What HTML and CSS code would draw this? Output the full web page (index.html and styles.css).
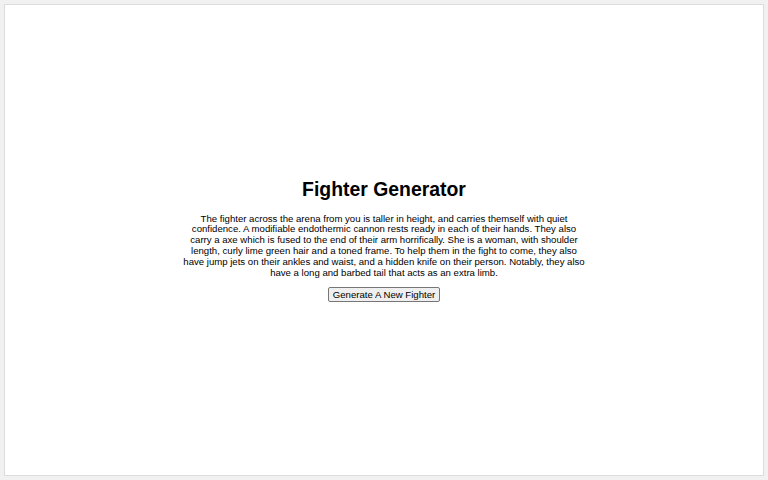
FILE: index.html
```html
<!DOCTYPE html>
<html lang="en">
<head>
    <title>Fighter Generator</title>
    <link rel="stylesheet" href="styles.css">
</head>
<body>
    <div class="frame">
        <div class="generator">
            <h1 class="title">Fighter Generator</h1>
            <p class="fighter-text" id="fighter-text">The fighter across the arena from you is taller in height, and carries themself with quiet confidence. A modifiable endothermic cannon rests ready in each of their hands. They also carry a axe which is fused to the end of their arm horrifically. She is a woman, with shoulder length, curly lime green hair and a toned frame. To help them in the fight to come, they also have jump jets on their ankles and waist, and a hidden knife on their person. Notably, they also have a long and barbed tail that acts as an extra limb.</p>
            <button class="new-button" id="btn">Generate A New Fighter</button>
        </div>
    </div>
</body>
</html>
```

FILE: styles.css
```css
* {
    margin: 0;
    padding: 0;
    box-sizing: border-box;
}

body {
    background: #f1f1f1;
    font-family: "Liberation Sans", Arial, sans-serif;
    padding: 4px;
    height: 480px;
}

.frame {
    height: 100%;
    background: white;
    border: 1px solid #dcdcdc;
    display: flex;
    align-items: center;
    justify-content: center;
}

.generator {
    width: 404px;
    text-align: center;
}

.title {
    font-size: 19.4px;
    font-weight: bold;
    margin-bottom: 13px;
}

.fighter-text {
    font-size: 9.6px;
    line-height: 10.8px;
    margin-bottom: 6px;
}

.new-button {
    font-family: "Liberation Sans", Arial, sans-serif;
    font-size: 9.6px;
    padding: 1px 4px;
    background: #efefef;
    border: 1px solid #767676;
    border-radius: 2px;
}
```
